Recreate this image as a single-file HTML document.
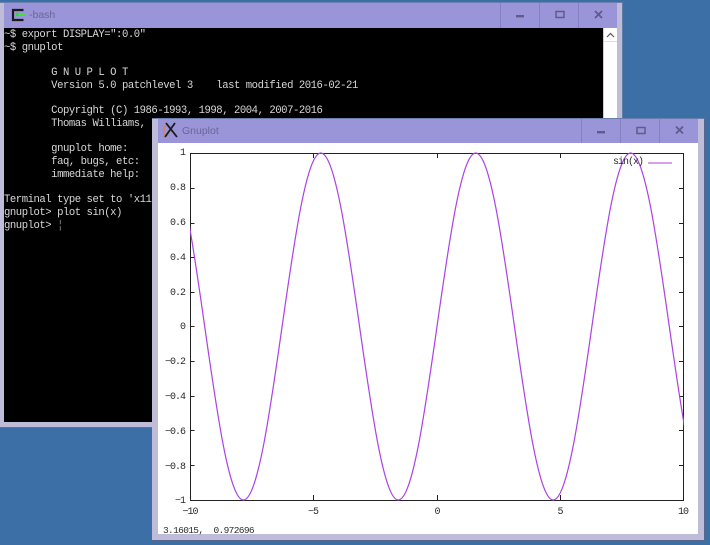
<!DOCTYPE html>
<html><head><meta charset="utf-8">
<style>
html,body{margin:0;padding:0}
body{width:710px;height:545px;overflow:hidden;position:relative;background:#3b6fa6;font-family:"Liberation Sans",sans-serif}
.a{position:absolute}
pre{margin:0;font:10.6px/12.72px "Liberation Mono",monospace;letter-spacing:-.46px;color:#d8d8d8}
.sep{position:absolute;width:1px;background:#8580c0}
.t{position:absolute;font:10px/12px "Liberation Mono",monospace;letter-spacing:-1px;color:#2a2a2a;white-space:pre}
</style></head><body>

<!-- terminal window -->
<div class="a" style="left:0;top:2px;width:623px;height:426px;background:#bfbcda;border-right:1px solid #5f7ea6;border-bottom:1px solid #5f6f96;border-top:1px solid #6a7fae;box-sizing:border-box"></div>
<div class="a" style="left:4px;top:3px;width:613px;height:25px;background:#9a94d8"></div>
<div class="sep" style="left:500px;top:3px;height:25px"></div>
<div class="sep" style="left:539px;top:3px;height:25px"></div>
<div class="sep" style="left:578px;top:3px;height:25px"></div>
<svg class="a" style="left:0;top:0" width="623" height="30">
<path d="M23.500 10H13V20H23.500" fill="none" stroke="#1a1a1a" stroke-width="2.200"/>
<path d="M16 12.500L21 14.500L16 16.500Z" fill="#2fd02f"/>
<path d="M17 14.500H25" stroke="#40e040" stroke-width="1"/>
<rect x="516" y="15" width="8" height="2.400" fill="#5f5c8c"/>
<rect x="556" y="11.500" width="8" height="6" fill="none" stroke="#5f5c8c" stroke-width="1.500"/>
<path d="M595 11L602 18M602 11L595 18" stroke="#5f5c8c" stroke-width="1.800"/>
</svg>
<div class="a" style="left:29px;top:9px;font-size:10.500px;line-height:12px;color:#6a6798">-bash</div>
<div class="a" style="left:4px;top:28px;width:599px;height:394px;background:#000"></div>
<pre class="a" style="left:4px;top:29px">~$ export DISPLAY=":0.0"
~$ gnuplot

        G N U P L O T
        Version 5.0 patchlevel 3    last modified 2016-02-21

        Copyright (C) 1986-1993, 1998, 2004, 2007-2016
        Thomas Williams, Colin Kelley and many others

        gnuplot home:     http://www.gnuplot.info
        faq, bugs, etc:   type "help FAQ"
        immediate help:   type "help"

Terminal type set to 'x11'
gnuplot&gt; plot sin(x)
gnuplot&gt; <span style="color:#888">&#166;</span></pre>
<div class="a" style="left:603px;top:28px;width:14px;height:394px;background:#fff;border-left:1px solid #ccc;box-sizing:border-box"></div>
<svg class="a" style="left:603px;top:28px" width="14" height="14"><path d="M4 9L7.500 5.500L11 9" fill="none" stroke="#555" stroke-width="1.200"/><path d="M1 13.500H14" stroke="#ddd"/></svg>

<!-- gnuplot window -->
<div class="a" style="left:152px;top:118px;width:553px;height:423px;background:#bfbcda;border-top:1px solid #6a7fae;border-right:1px solid #55688c;border-bottom:1px solid #55688c;box-sizing:border-box"></div>
<div class="a" style="left:158px;top:119px;width:540px;height:24px;background:#9a94d8"></div>
<div class="sep" style="left:581px;top:119px;height:24px"></div>
<div class="sep" style="left:620px;top:119px;height:24px"></div>
<div class="sep" style="left:659px;top:119px;height:24px"></div>
<div class="a" style="left:158px;top:143px;width:540px;height:391px;background:#fff"></div>
<div class="a" style="left:182px;top:125px;font-size:10.500px;line-height:12px;color:#6a6798">Gnuplot</div>
<svg class="a" style="left:0;top:0;width:710px;height:545px" viewBox="0 0 710 545">
<defs><clipPath id="c"><rect x="190" y="152" width="494" height="349"/></clipPath></defs>
<path d="M167 124C164 127 163 131 164 134C165 136 168 136 170 135" fill="none" stroke="#e08050" stroke-width="1.400"/>
<path d="M166 123L177 137M175 123L165 137" stroke="#1c1c1c" stroke-width="1.800"/>
<rect x="597" y="131" width="8" height="2.400" fill="#5f5c8c"/>
<rect x="637" y="127.500" width="8" height="6" fill="none" stroke="#5f5c8c" stroke-width="1.500"/>
<path d="M676 126.500L683 133.500M683 126.500L676 133.500" stroke="#5f5c8c" stroke-width="1.800"/>
<path d="M190.500 153.500H683.500V500.500H190.500Z" fill="none" stroke="#222" stroke-width="1"/>
<g stroke="#222" stroke-width="1">
<path d="M190 188.500h4.500M190 223.500h4.500M190 257.500h4.500M190 292.500h4.500M190 326.500h4.500M190 361.500h4.500M190 396.500h4.500M190 430.500h4.500M190 465.500h4.500"/>
<path d="M684 188.500h-5M684 223.500h-5M684 257.500h-5M684 292.500h-5M684 326.500h-5M684 361.500h-5M684 396.500h-5M684 430.500h-5M684 465.500h-5"/>
<path d="M313.500 500v-5M437.500 500v-5M560.500 500v-5M313.500 153v5M437.500 153v5M560.500 153v5"/>
</g>
<path clip-path="url(#c)" d="M166 153C194.200 153 215.200 500 243.400 500C271.600 500 292.600 153 320.800 153C349 153 370.100 500 398.300 500C426.500 500 447.500 153 475.700 153C503.900 153 525 500 553.200 500C581.400 500 602.400 153 630.600 153C658.800 153 679.800 500 708 500" fill="none" stroke="#ab42e4" stroke-width="1.200"/>
<path d="M648 163H672" stroke="#ab42e4" stroke-width="1.100"/>
</svg>
<div class="t" style="left:613px;top:157px">sin(x)</div>
<div class="t" style="left:158px;width:27px;text-align:right;top:148px">1</div>
<div class="t" style="left:158px;width:27px;text-align:right;top:183px">0.8</div>
<div class="t" style="left:158px;width:27px;text-align:right;top:218px">0.6</div>
<div class="t" style="left:158px;width:27px;text-align:right;top:253px">0.4</div>
<div class="t" style="left:158px;width:27px;text-align:right;top:288px">0.2</div>
<div class="t" style="left:158px;width:27px;text-align:right;top:322px">0</div>
<div class="t" style="left:158px;width:27px;text-align:right;top:357px">&#8722;0.2</div>
<div class="t" style="left:158px;width:27px;text-align:right;top:392px">&#8722;0.4</div>
<div class="t" style="left:158px;width:27px;text-align:right;top:427px">&#8722;0.6</div>
<div class="t" style="left:158px;width:27px;text-align:right;top:462px">&#8722;0.8</div>
<div class="t" style="left:158px;width:27px;text-align:right;top:496px">&#8722;1</div>
<div class="t" style="left:170px;width:40px;text-align:center;top:507px">&#8722;10</div>
<div class="t" style="left:293px;width:40px;text-align:center;top:507px">&#8722;5</div>
<div class="t" style="left:417px;width:40px;text-align:center;top:507px">0</div>
<div class="t" style="left:540px;width:40px;text-align:center;top:507px">5</div>
<div class="t" style="left:663px;width:40px;text-align:center;top:507px">10</div>
<div class="t" style="left:163px;top:525px;font-size:9.500px;letter-spacing:-.65px">3.16015,  0.972696</div>
</body></html>
